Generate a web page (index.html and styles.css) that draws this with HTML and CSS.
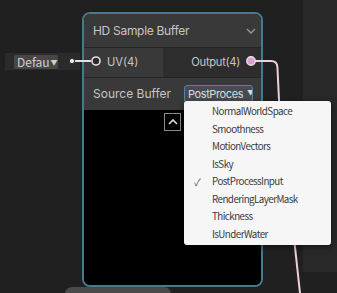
FILE: index.html
```html
<!DOCTYPE html>
<html lang="en">

<head>
    <meta charset="UTF-8">
    <title>HD Sample Buffer</title>
    <link rel="stylesheet" href="styles.css">
</head>

<body>
    <div class="graph">
        <div class="side-panel"></div>
        <div class="scroll-pill"></div>

        <div class="input-field">
            <div class="default-box">Defau<span class="arrow">&#9660;</span></div>
        </div>

        <div class="node">
            <div class="node-title">
                <span>HD Sample Buffer</span>
                <svg class="chevron" width="10" height="6" viewBox="0 0 10 6">
                    <path d="M1 1 L5 5 L9 1" fill="none" stroke="#9a9a9a" stroke-width="1.3"/>
                </svg>
            </div>
            <div class="ports">
                <div class="inputs">UV(4)</div>
                <div class="outputs">Output(4)</div>
            </div>
            <div class="settings">
                <span class="label">Source Buffer</span>
                <div class="dropdown">PostProces<span class="arrow">&#9660;</span></div>
            </div>
            <div class="preview">
                <div class="collapse">
                    <svg width="10" height="6" viewBox="0 0 10 6">
                        <path d="M1 5 L5 1 L9 5" fill="none" stroke="#e0e0e0" stroke-width="1.6"/>
                    </svg>
                </div>
            </div>
        </div>

        <svg class="wires" width="337" height="293" viewBox="0 0 337 293">
            <path d="M255 61 L271 61 Q277 61 277.4 67 L279 100 L300 293" fill="none" stroke="#ecd0e2" stroke-width="2"/>
            <line x1="74" y1="61" x2="91" y2="61" stroke="#e6e0e6" stroke-width="2"/>
            <circle cx="72" cy="61" r="2.6" fill="#f4eef4" stroke="#2b2b2b" stroke-width="1"/>
            <circle cx="96" cy="61" r="4" fill="#2a2a2a" stroke="#eedce8" stroke-width="1.6"/>
            <circle cx="251" cy="61" r="4.2" fill="#d7a0cf" stroke="#f2dcee" stroke-width="1.4"/>
        </svg>

        <ul class="menu">
            <li>NormalWorldSpace</li>
            <li>Smoothness</li>
            <li>MotionVectors</li>
            <li>IsSky</li>
            <li class="checked">PostProcessInput</li>
            <li>RenderingLayerMask</li>
            <li>Thickness</li>
            <li>IsUnderWater</li>
        </ul>
    </div>
</body>

</html>
```

FILE: styles.css
```css
body {
    margin: 0;
    padding: 0;
    background-color: #202020;
    font-family: 'Inter', 'Noto Sans', sans-serif;
    overflow: hidden;
}

.graph {
    position: relative;
    width: 337px;
    height: 293px;
    overflow: hidden;
}

.side-panel {
    position: absolute;
    top: 0;
    right: 0;
    width: 34px;
    height: 272px;
    background-color: #282828;
}

.scroll-pill {
    position: absolute;
    left: 65px;
    top: 287px;
    width: 106px;
    height: 14px;
    border-radius: 7px;
    background-color: #4a4a4a;
}

.input-field {
    position: absolute;
    left: 5px;
    top: 53px;
    width: 75px;
    height: 17px;
    background-color: #2b2b2b;
    display: flex;
    align-items: center;
}

.default-box {
    margin-left: 9px;
    width: 44px;
    height: 14px;
    background-color: #474747;
    border-radius: 2px;
    color: #cfcfcf;
    font-family: 'Noto Sans CJK KR', sans-serif;
    font-size: 12px;
    line-height: 14px;
    padding-left: 3px;
    box-sizing: border-box;
    white-space: nowrap;
}

.default-box .arrow {
    font-size: 7px;
    margin-left: 1px;
    vertical-align: 2px;
}

.node {
    position: absolute;
    left: 82px;
    top: 12px;
    width: 181px;
    height: 275px;
    box-sizing: border-box;
    border: 2px solid #467b8c;
    border-radius: 8px;
    overflow: hidden;
    background-color: #000;
    display: flex;
    flex-direction: column;
}

.node-title {
    height: 33px;
    flex-shrink: 0;
    background-color: #393939;
    border-bottom: 1px solid #242424;
    display: flex;
    align-items: center;
    justify-content: space-between;
    padding: 0 5px 0 9px;
    color: #c6c6c6;
    font-size: 12px;
    letter-spacing: -0.3px;
    line-height: 16px;
}

.ports {
    height: 29px;
    flex-shrink: 0;
    display: flex;
    border-bottom: 1px solid #242424;
    font-size: 11.2px;
    color: #c6c6c6;
}

.inputs {
    width: 79px;
    background-color: #393939;
    padding-left: 23px;
    box-sizing: border-box;
    line-height: 29px;
}

.outputs {
    flex: 1;
    background-color: #2d2d2d;
    text-align: right;
    padding-right: 21px;
    line-height: 29px;
    letter-spacing: -0.3px;
}

.settings {
    height: 32px;
    flex-shrink: 0;
    background-color: #393939;
    display: flex;
    align-items: center;
    justify-content: space-between;
    padding: 0 8px 0 9px;
    font-size: 12px;
    line-height: 16px;
    color: #c6c6c6;
}

.dropdown {
    width: 69px;
    height: 18px;
    box-sizing: border-box;
    background-color: #464c51;
    border: 1px solid #5d8196;
    border-radius: 3px;
    color: #dcdcdc;
    font-size: 11px;
    letter-spacing: -0.4px;
    line-height: 16px;
    padding-left: 3px;
    white-space: nowrap;
    overflow: hidden;
}

.dropdown .arrow {
    font-size: 7px;
    margin-left: 4px;
    vertical-align: 2px;
}

.preview {
    flex: 1;
    background-color: #000;
    display: flex;
    justify-content: center;
    align-items: flex-start;
}

.collapse {
    margin-top: 3px;
    width: 17px;
    height: 18px;
    box-sizing: border-box;
    border: 1px solid #8a8a8a;
    display: flex;
    align-items: center;
    justify-content: center;
}

.wires {
    position: absolute;
    left: 0;
    top: 0;
}

.menu {
    position: absolute;
    left: 184px;
    top: 101px;
    width: 147px;
    margin: 0;
    padding: 2px 0;
    list-style: none;
    background-color: #f6f6f6;
    border-radius: 3px;
    box-shadow: 0px 2px 6px rgba(0, 0, 0, 0.5);
    font-family: 'Noto Sans CJK KR', sans-serif;
    font-size: 9.8px;
    letter-spacing: -0.55px;
    color: #3a3a3a;
}

.menu li {
    height: 17.5px;
    line-height: 17.5px;
    padding-left: 28px;
    position: relative;
}

.menu li.checked::before {
    content: '\2713';
    position: absolute;
    left: 10px;
    font-size: 10px;
    color: #555;
}
```
